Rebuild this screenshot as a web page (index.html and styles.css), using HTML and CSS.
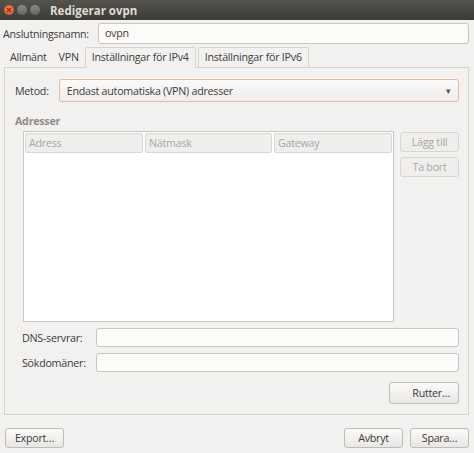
FILE: index.html
```html
<!DOCTYPE html>
<html lang="sv">
<head>
  <meta charset="UTF-8" />
  <title>Redigerar ovpn</title>
  <link rel="stylesheet" href="styles.css">
</head>
<body>
  <div class="window">
    <div class="titlebar">
      <span class="wbtn close">
        <svg width="8" height="8" viewBox="0 0 8 8"><path d="M2 2 L6 6 M6 2 L2 6" stroke="#8a3418" stroke-width="1.3"/></svg>
      </span>
      <span class="wbtn"></span>
      <span class="wbtn"></span>
      <span class="title">Redigerar ovpn</span>
    </div>

    <div class="content">
      <div class="name-row">
        <label>Anslutningsnamn:</label>
        <div class="entry">ovpn</div>
      </div>

      <div class="tabs">
        <div class="tab">Allmänt</div>
        <div class="tab">VPN</div>
        <div class="tab active">Inställningar för IPv4</div>
        <div class="tab boxed">Inställningar för IPv6</div>
      </div>

      <div class="panel">
        <div class="method-row">
          <label>Metod:</label>
          <div class="combo">
            <span>Endast automatiska (VPN) adresser</span>
            <span class="arrow">▾</span>
          </div>
        </div>

        <div class="section-title">Adresser</div>

        <div class="addresses">
          <div class="table">
            <div class="thead">
              <div class="th">Adress</div>
              <div class="th">Nätmask</div>
              <div class="th">Gateway</div>
            </div>
          </div>
          <div class="side-buttons">
            <button class="btn disabled">Lägg till</button>
            <button class="btn disabled">Ta bort</button>
          </div>
        </div>

        <div class="field-row">
          <label>DNS-servrar:</label>
          <div class="entry"></div>
        </div>
        <div class="field-row">
          <label>Sökdomäner:</label>
          <div class="entry"></div>
        </div>

        <div class="routes-row">
          <button class="btn routes">Rutter…</button>
        </div>
      </div>

      <div class="footer">
        <button class="btn">Export…</button>
        <div class="footer-right">
          <button class="btn">Avbryt</button>
          <button class="btn">Spara…</button>
        </div>
      </div>
    </div>
  </div>
</body>
</html>
```

FILE: styles.css
```css
body {
  margin: 0;
  background: #f2f1f0;
  font-family: "Open Sans", "Noto Sans", sans-serif;
  font-size: 10.7px;
  letter-spacing: -0.25px;
  color: #3c3c3c;
}

.window {
  width: 474px;
  height: 453px;
  overflow: hidden;
}

/* title bar */
.titlebar {
  height: 20px;
  display: flex;
  align-items: center;
  gap: 3px;
  padding-left: 4px;
  background: linear-gradient(#55534d, #3c3b37);
}

.wbtn {
  width: 10px;
  height: 10px;
  border-radius: 50%;
  background: linear-gradient(#8c8a84, #66645f);
  display: flex;
  align-items: center;
  justify-content: center;
}

.wbtn.close {
  background: radial-gradient(circle at 50% 40%, #f6804a, #d7502a);
}

.title {
  margin-left: 7px;
  color: #dfdbd2;
  font-weight: bold;
  font-size: 11.5px;
  letter-spacing: 0;
}

.content {
  padding: 3px 5px 0 3px;
}

/* name row */
.name-row {
  display: flex;
  align-items: center;
  gap: 9px;
}

.entry {
  flex: 1;
  height: 19px;
  line-height: 19px;
  padding: 0 6px;
  background: #fcfbfa;
  border: 1px solid #c8c6c2;
  border-radius: 3px;
}

/* tabs */
.tabs {
  display: flex;
  align-items: flex-end;
  margin-top: 3px;
  padding-left: 1px;
  height: 20px;
}

.tab {
  padding: 0 6px;
  height: 19px;
  line-height: 19px;
}

.tab.active,
.tab.boxed {
  border: 1px solid #d6d4d0;
  border-bottom: none;
  border-radius: 2px 2px 0 0;
  background: #f2f1f0;
}

.tab.active {
  height: 20px;
  margin-bottom: -1px;
  position: relative;
}

.tab.boxed {
  margin-left: 2px;
}

/* notebook page */
.panel {
  margin-left: 1px;
  border: 1px solid #d6d4d0;
  padding: 11px 9px 0 10px;
  box-sizing: border-box;
  height: 348px;
}

.method-row {
  display: flex;
  align-items: center;
  gap: 10px;
}

.combo {
  flex: 1;
  height: 21px;
  display: flex;
  align-items: center;
  justify-content: space-between;
  padding: 0 7px;
  border: 1px solid #e5b89c;
  border-radius: 3px;
  background: linear-gradient(#fbfaf9, #efedeb);
}

.arrow {
  font-size: 9px;
  color: #555;
}

.section-title {
  margin-top: 12px;
  font-weight: bold;
  color: #8f8c87;
}

.addresses {
  display: flex;
  gap: 6px;
  margin-top: 3px;
  padding-left: 8px;
}

.table {
  width: 371px;
  height: 191px;
  box-sizing: border-box;
  border: 1px solid #c9c7c3;
  background: #fff;
}

.thead {
  display: grid;
  grid-template-columns: 118px 127px 1fr;
  gap: 2px;
  padding: 1px 1px 0 1px;
}

.th {
  height: 18px;
  line-height: 18px;
  padding-left: 3px;
  color: #a9a7a3;
  background: #efeeec;
  border: 1px solid #dad8d4;
  border-radius: 2px;
}

.side-buttons {
  display: flex;
  flex-direction: column;
  gap: 5px;
  padding-top: 1px;
}

.btn {
  font-family: inherit;
  font-size: 10.7px;
  letter-spacing: -0.25px;
  color: #3c3c3c;
  height: 20px;
  padding: 0 8px;
  border: 1px solid #bebcb8;
  border-radius: 3px;
  background: linear-gradient(#fbfaf9, #e9e7e4);
}

.btn.disabled {
  width: 59px;
  color: #aaa8a4;
  border-color: #d8d6d2;
  background: #efeeec;
}

.field-row {
  display: flex;
  align-items: center;
  margin-top: 6px;
  padding-left: 7px;
}

.field-row label {
  width: 74px;
}

.field-row .entry {
  height: 17px;
}

.routes-row {
  display: flex;
  justify-content: flex-end;
  margin-top: 10px;
}

.btn.routes {
  width: 70px;
  height: 22px;
  text-align: right;
}

/* dialog buttons */
.footer {
  display: flex;
  justify-content: space-between;
  margin-top: 13px;
  padding-left: 2px;
}

.footer .btn {
  width: 59px;
}

.footer-right {
  display: flex;
  gap: 7px;
}
```
